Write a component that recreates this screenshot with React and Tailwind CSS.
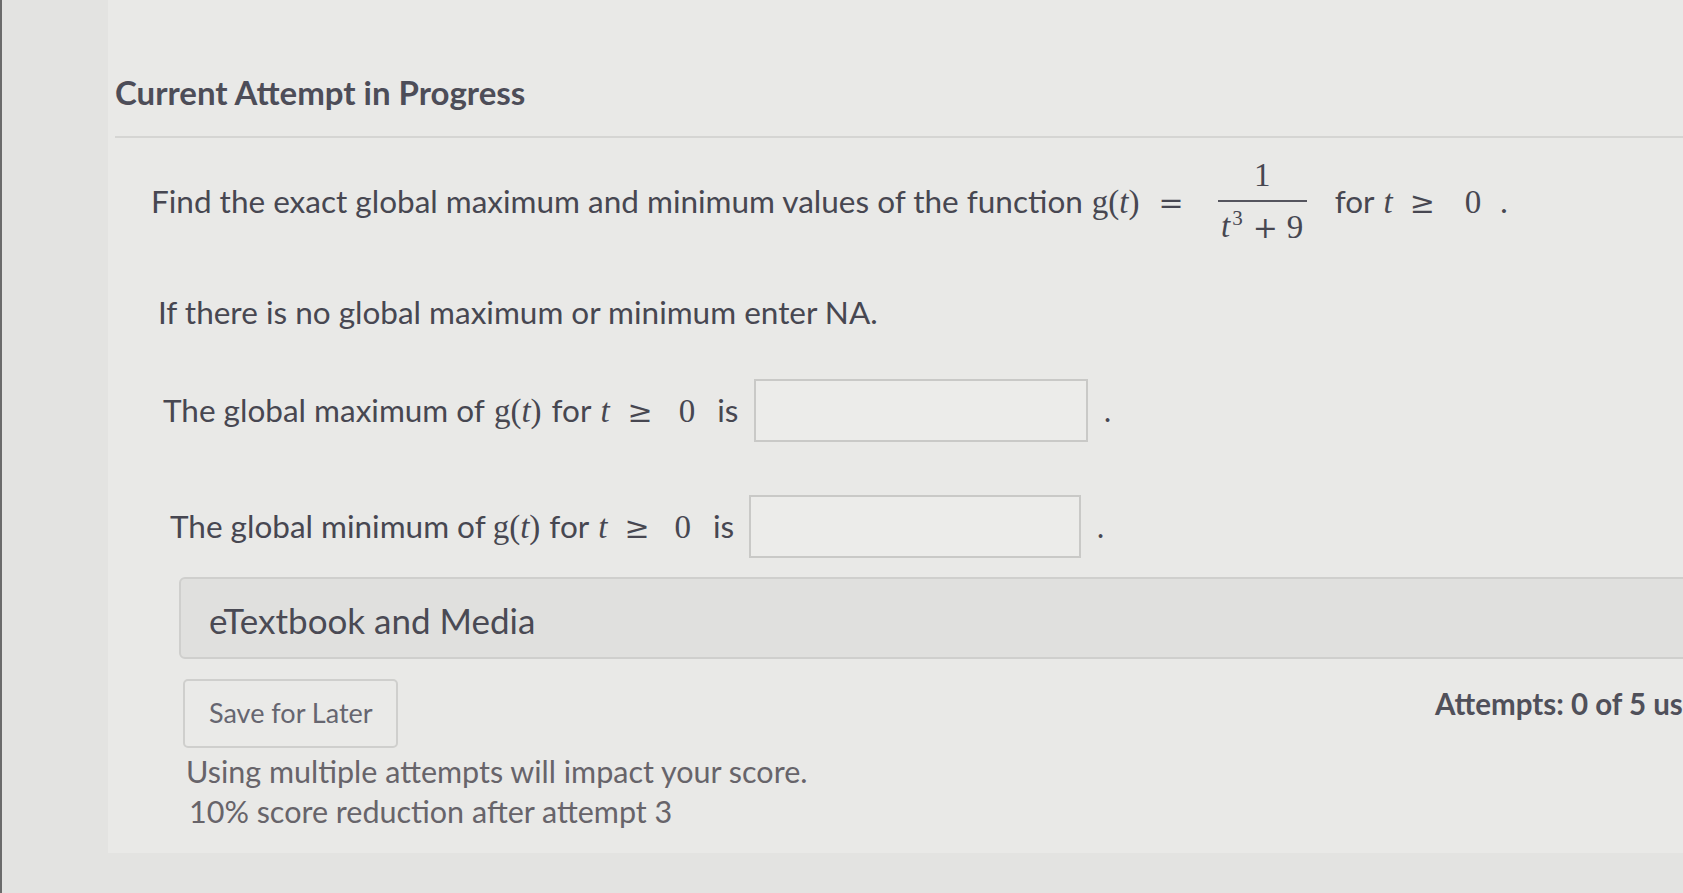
import React from "react";

const lato = { fontFamily: "Lato, 'Open Sans', sans-serif" };
const serif = { fontFamily: "'Liberation Serif', 'DejaVu Serif', serif" };
const rel = { fontFamily: "'DejaVu Serif', 'Liberation Serif', serif" };

function M({ children, i }) {
  return (
    <span className={i ? "italic" : ""} style={serif}>
      {children}
    </span>
  );
}

function R({ children }) {
  return (
    <span className="text-[30px]" style={rel}>
      {children}
    </span>
  );
}

function G() {
  return (
    <span className="text-[33px]">
      <M>g(</M>
      <M i>t</M>
      <M>)</M>
    </span>
  );
}

function Cond({ gapT, gapGe, gapZero }) {
  return (
    <>
      <span className={gapT}>for</span>
      <span className="ml-[9px] text-[33px]">
        <M i>t</M>
      </span>
      <span className={gapGe}>
        <R>≥</R>
      </span>
      <span className={gapZero + " text-[33px]"}>
        <M>0</M>
      </span>
    </>
  );
}

export default function App() {
  return (
    <div
      className="w-[1683px] h-[893px] overflow-hidden bg-[#e3e3e1] text-[#474751] border-l-2 border-[#6b6b6b]"
      style={lato}
    >
      <div className="ml-[106px] h-[853px] bg-[#e9e9e7] pt-[72px] flex flex-col">
        {/* Title */}
        <div className="pl-[7px] h-[40px] leading-[40px] text-[33px] font-bold text-[#4d4d58] whitespace-nowrap">
          Current Attempt in Progress
        </div>
        <div className="mt-[24px] ml-[7px] h-0 border-t-2 border-[#d5d5d3]" />

        {/* Problem statement */}
        <div className="mt-[19px] pl-[43px] h-[90px] flex items-center text-[31.5px] whitespace-nowrap">
          <span>Find the exact global maximum and minimum values of the function</span>
          <span className="ml-[9px]">
            <G />
          </span>
          <span className="ml-[19px]">
            <R>=</R>
          </span>
          <div className="ml-[34px] flex flex-col items-center w-[89px] pb-[5px]">
            <div className="h-[32px] leading-[32px] text-[33px]">
              <M>1</M>
            </div>
            <div className="mt-[11px] h-[2px] w-[89px] bg-[#55555e]" />
            <div className="mt-[8px] h-[32px] leading-[32px] text-[33px] flex items-center">
              <M i>t</M>
              <span className="text-[21px] relative -top-[9px] ml-[2px]">
                <M>3</M>
              </span>
              <span className="ml-[10px]">
                <R>+</R>
              </span>
              <span className="ml-[9px]">
                <M>9</M>
              </span>
            </div>
          </div>
          <Cond gapT="ml-[28px]" gapGe="ml-[17px]" gapZero="ml-[30px]" />
          <span className="ml-[19px]">.</span>
        </div>

        {/* NA instructions */}
        <div className="mt-[45px] pl-[50px] h-[40px] leading-[40px] text-[31.5px] whitespace-nowrap">
          If there is no global maximum or minimum enter NA.
        </div>

        {/* Max row */}
        <div className="mt-[47px] pl-[55px] h-[63px] flex items-center whitespace-nowrap">
          <div className="w-[591px] text-[31.5px] flex items-center">
            <span>The global maximum of</span>
            <span className="ml-[9px]">
              <G />
            </span>
            <span className="ml-[10px]" />
            <Cond gapT="" gapGe="ml-[18px]" gapZero="ml-[26px]" />
            <span className="ml-[22px]">is</span>
          </div>
          <div className="shrink-0 w-[334px] h-[63px] border-2 border-[#c9c9c7] bg-[#ececea]" />
          <span className="ml-[16px] text-[30px]">.</span>
        </div>

        {/* Min row */}
        <div className="mt-[53px] pl-[62px] h-[63px] flex items-center whitespace-nowrap">
          <div className="w-[579px] text-[31.5px] flex items-center">
            <span>The global minimum of</span>
            <span className="ml-[7px]">
              <G />
            </span>
            <span className="ml-[9px]" />
            <Cond gapT="" gapGe="ml-[17px]" gapZero="ml-[25px]" />
            <span className="ml-[22px]">is</span>
          </div>
          <div className="shrink-0 w-[332px] h-[63px] border-2 border-[#c9c9c7] bg-[#ececea]" />
          <span className="ml-[16px] text-[30px]">.</span>
        </div>

        {/* eTextbook panel */}
        <div className="mt-[19px] ml-[71px] -mr-[10px] h-[82px] rounded-l-[6px] border-2 border-[#cfcfcd] bg-[#e0e0de] flex items-center pl-[28px] pt-[4px] text-[35px] text-[#4a4a54] whitespace-nowrap">
          eTextbook and Media
        </div>

        {/* Save / attempts row */}
        <div className="mt-[20px] flex items-start whitespace-nowrap">
          <div className="shrink-0 ml-[75px] w-[215px] h-[69px] rounded-[5px] border-2 border-[#cfcfcd] bg-[#eaeae8] flex items-center pl-[24px] text-[27px] text-[#666670]">
            Save for Later
          </div>
          <div className="shrink-0 ml-[1037px] h-[50px] leading-[50px] text-[29.5px] font-bold text-[#50505a]">
            Attempts: 0 of 5 used
          </div>
        </div>

        {/* Footer notes */}
        <div className="mt-[5px] ml-[78px] h-[36px] leading-[36px] text-[30.5px] text-[#67646a] whitespace-nowrap">
          Using multiple attempts will impact your score.
        </div>
        <div className="mt-[4px] ml-[81px] h-[36px] leading-[36px] text-[30.5px] text-[#67646a] whitespace-nowrap">
          10% score reduction after attempt 3
        </div>
      </div>
    </div>
  );
}
